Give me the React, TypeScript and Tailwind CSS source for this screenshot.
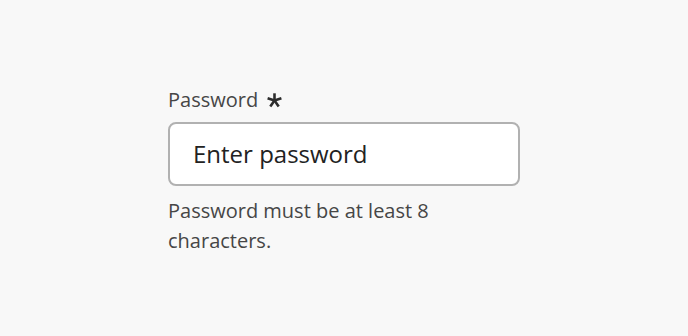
export default function App() {
  return (
    <div
      className="w-[688px] h-[336px] bg-[#f8f8f8] flex items-center justify-center pt-[6px]"
      style={{ fontFamily: '"Open Sans", "Noto Sans", sans-serif' }}
    >
      <div className="w-[352px] flex flex-col">
        <label className="text-[20px] leading-[28px] text-[#464646] flex items-center gap-[9px]">
          Password
          <svg width="15" height="15" viewBox="0 0 15 15" className="mt-[1px]">
            <g stroke="#2c2c2c" strokeWidth="2.6" strokeLinecap="butt">
              <line x1="7.5" y1="7.5" x2="7.5" y2="0.3" />
              <line x1="7.5" y1="7.5" x2="14.4" y2="5.3" />
              <line x1="7.5" y1="7.5" x2="11.7" y2="13.4" />
              <line x1="7.5" y1="7.5" x2="3.3" y2="13.4" />
              <line x1="7.5" y1="7.5" x2="0.6" y2="5.3" />
            </g>
          </svg>
        </label>
        <div className="mt-[8px] h-[64px] rounded-[8px] border-2 border-[#b1b1b1] bg-white flex items-center px-[23px]">
          <span className="text-[24px] text-[#222]">Enter password</span>
        </div>
        <p className="mt-[10px] text-[20px] leading-[30px] text-[#464646]">
          Password must be at least 8 characters.
        </p>
      </div>
    </div>
  );
}
